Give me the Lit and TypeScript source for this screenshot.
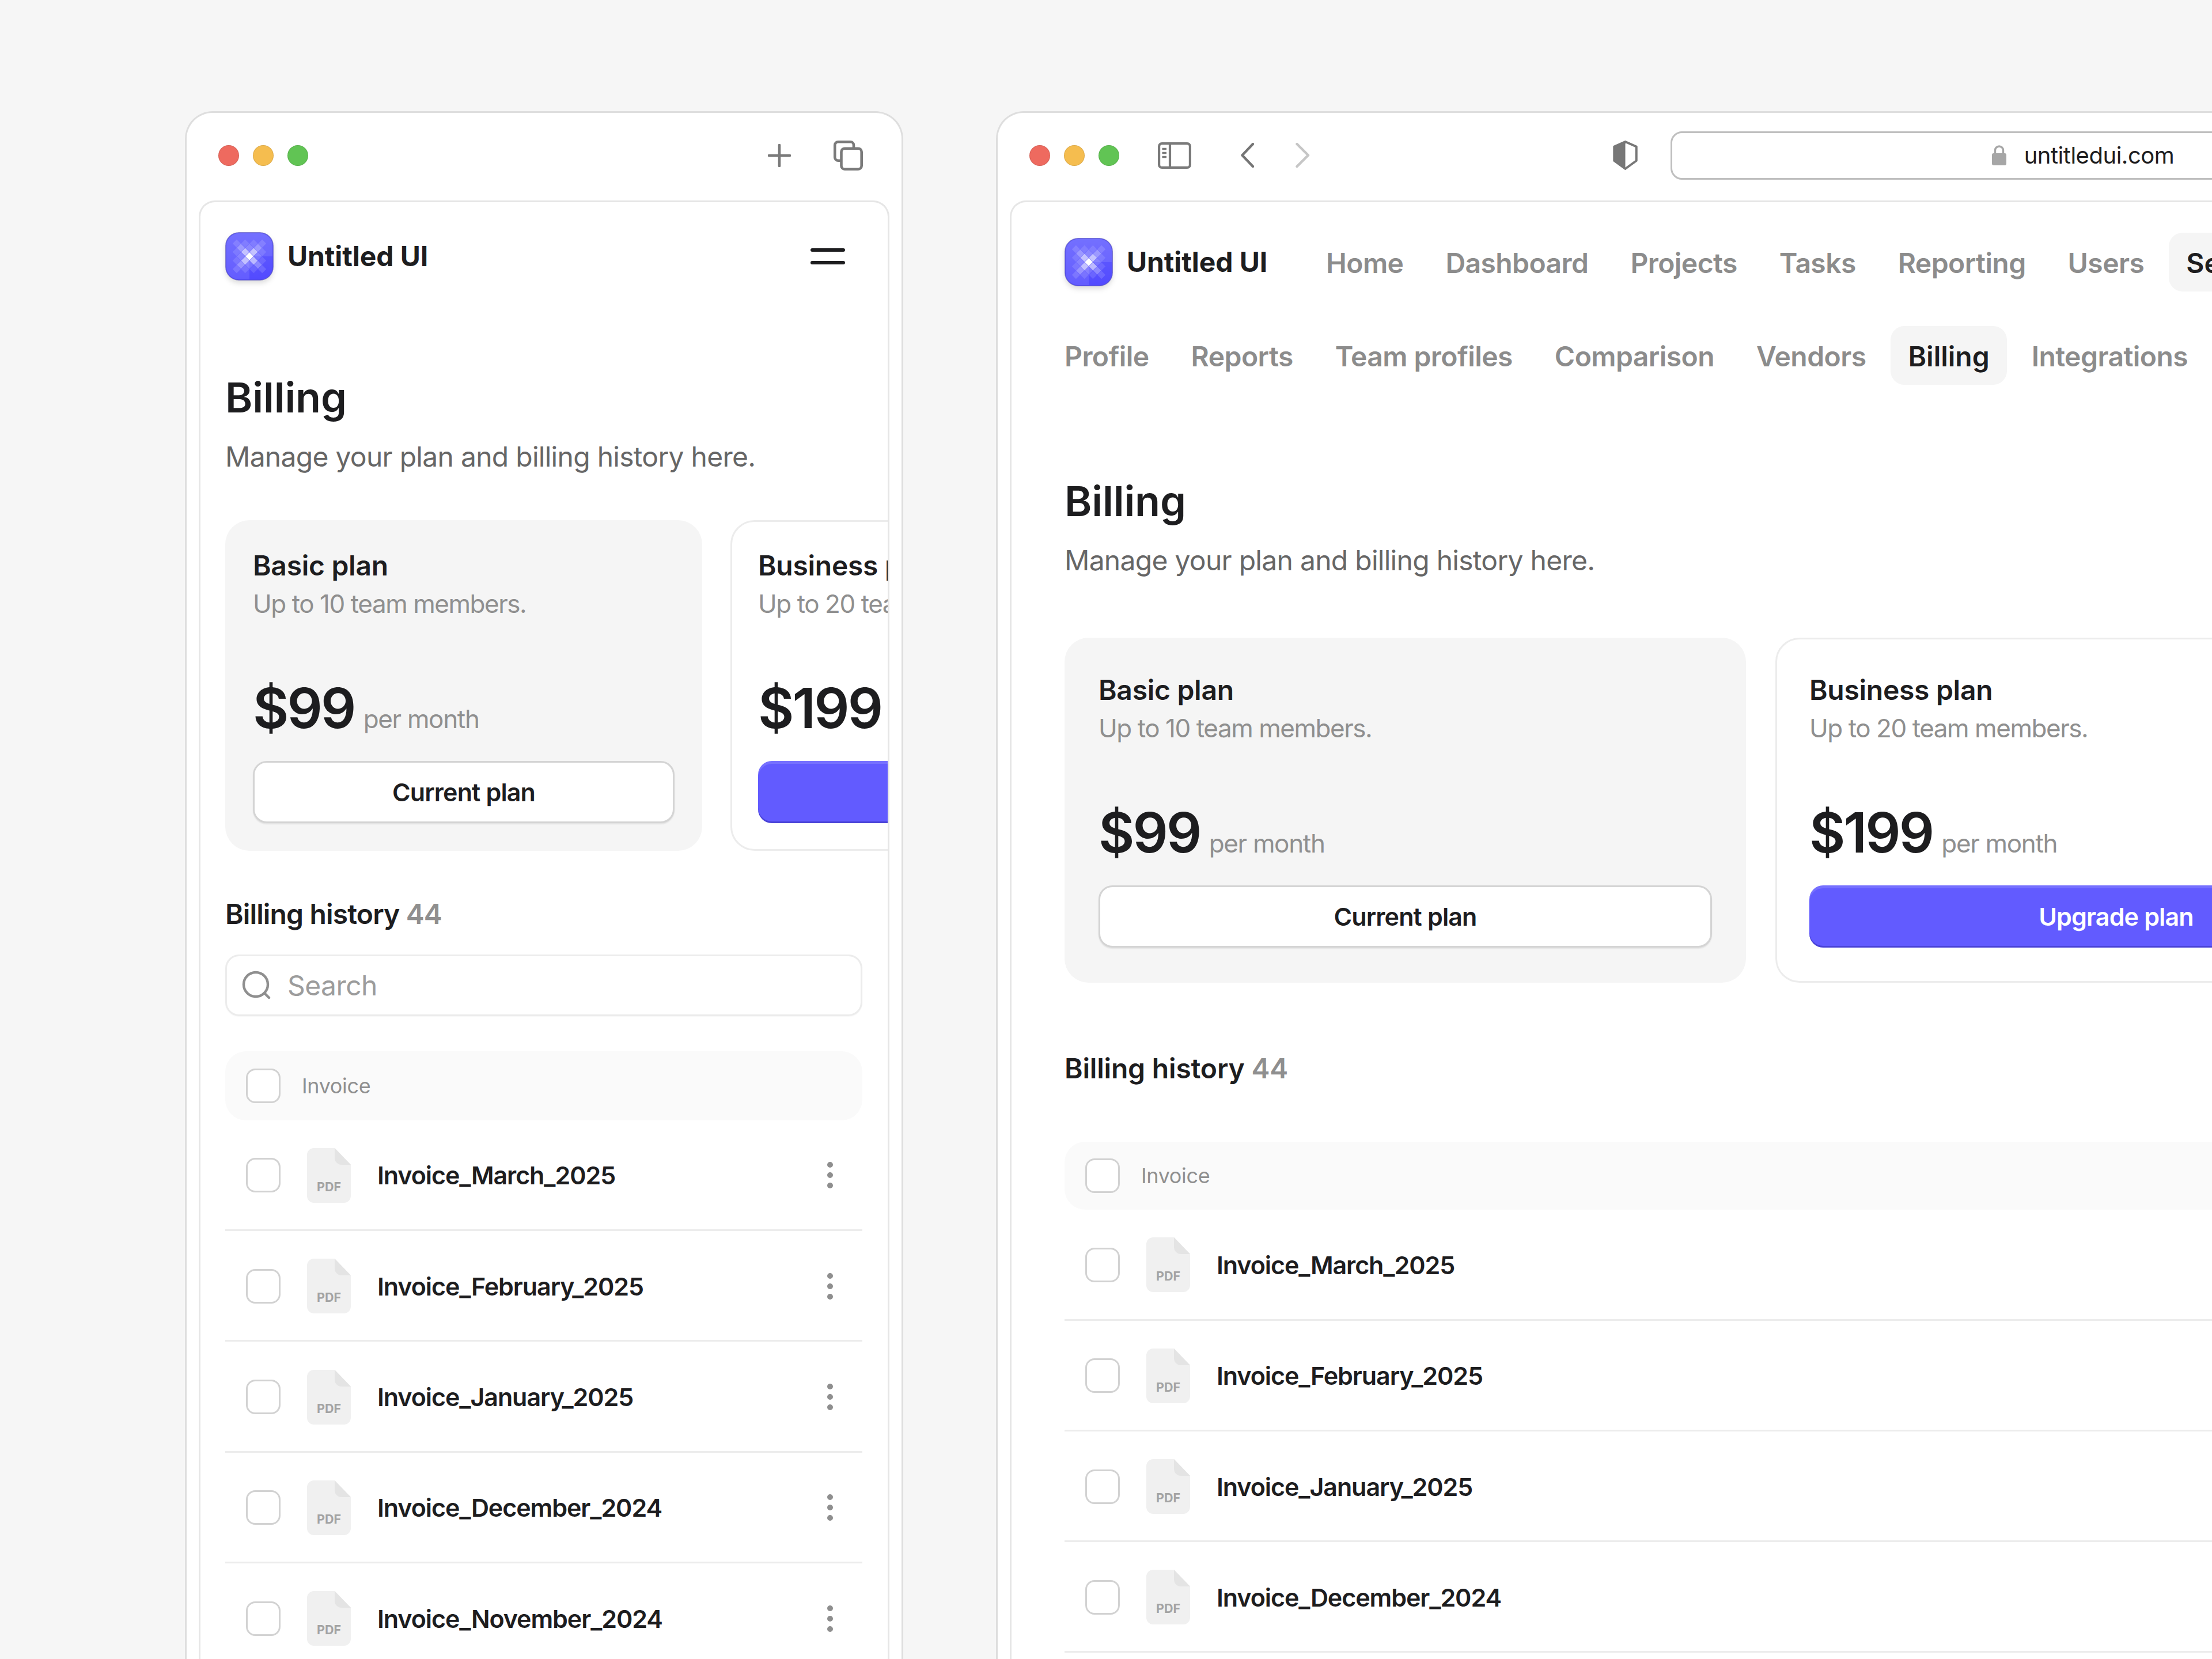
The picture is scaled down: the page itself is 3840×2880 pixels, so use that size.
import { LitElement, html, css, svg } from "lit";
import { customElement } from "lit/decorators.js";

const diamonds: [number, number, number][] = [
  [0, 0, 1],
  [-1, -1, 0.6], [1, -1, 0.6], [-1, 1, 0.6], [1, 1, 0.6],
  [-2, 0, 0.2], [2, 0, 0.2], [0, -2, 0.2], [0, 2, 0.2],
  [-2, -2, 0.32], [2, -2, 0.32], [-2, 2, 0.32], [2, 2, 0.32],
  [-3, -1, 0.12], [3, -1, 0.12], [-3, 1, 0.12], [3, 1, 0.12],
  [-1, -3, 0.12], [1, -3, 0.12], [-1, 3, 0.12], [1, 3, 0.12],
  [-3, -3, 0.14], [3, -3, 0.14], [-3, 3, 0.14], [3, 3, 0.14],
];

const logo = () => html`<svg class="logo" viewBox="0 0 84 84">
  <defs>
    <linearGradient id="lg" x1="0" y1="0" x2="0" y2="1">
      <stop offset="0" stop-color="#6460ff"></stop>
      <stop offset="1" stop-color="#524aff"></stop>
    </linearGradient>
  </defs>
  <rect x="0.8" y="0.8" width="82.4" height="82.4" rx="23" fill="url(#lg)" stroke="#4f4ab8" stroke-opacity=".6" stroke-width="1.6"></rect>
  <path d="M24 2H60A22 22 0 0 1 82 24V42H42V82H24A22 22 0 0 1 2 60V24A22 22 0 0 1 24 2Z" fill="#fff" opacity=".1"></path>
  ${diamonds.map(([i, j, o]) => {
    const cx = 42 + i * 7.4;
    const cy = 42 + j * 7.4;
    const r = 7;
    return svg`<polygon points="${cx},${cy - r} ${cx + r},${cy} ${cx},${cy + r} ${cx - r},${cy}" fill="#fff" opacity="${o}"></polygon>`;
  })}
</svg>`;

const fileIcon = () => html`<svg class="file" viewBox="0 0 76 95">
  <path d="M12 0H48L76 29V83A12 12 0 0 1 64 95H12A12 12 0 0 1 0 83V12A12 12 0 0 1 12 0Z" fill="#f0f0f0"></path>
  <path d="M48 0L76 29H60A12 12 0 0 1 48 17Z" fill="#e4e4e4"></path>
  <text x="38" y="75" text-anchor="middle" font-family="Inter, sans-serif" font-size="21.5" font-weight="700" fill="#a3a3a3">PDF</text>
</svg>`;

const kebab = () => html`<svg class="kebab" viewBox="0 0 12 48">
  <circle cx="6" cy="6" r="5" fill="#8e8e8e"></circle>
  <circle cx="6" cy="24" r="5" fill="#8e8e8e"></circle>
  <circle cx="6" cy="42" r="5" fill="#8e8e8e"></circle>
</svg>`;

const invoices = [
  "Invoice_March_2025",
  "Invoice_February_2025",
  "Invoice_January_2025",
  "Invoice_December_2024",
  "Invoice_November_2024",
];

const card = (title: string, sub: string, price: string, btn: string, primary: boolean) => html`
  <section class="card ${primary ? "outlined" : "filled"}">
    <h3 class="card-title">${title}</h3>
    <p class="card-sub">${sub}</p>
    <div class="price"><span class="amount">${price}</span><span class="per">per month</span></div>
    <div class="btn ${primary ? "btn-primary" : ""}">${btn}</div>
  </section>`;

const table = () => html`
  <div class="thead"><span class="check"></span><span class="thead-label">Invoice</span></div>
  ${invoices.map(
    (n) => html`<div class="row">
      <span class="check"></span>${fileIcon()}<span class="name">${n}</span>${kebab()}
    </div>`
  )}`;

const cards = () => html`<div class="cards">
  ${card("Basic plan", "Up to 10 team members.", "$99", "Current plan", false)}
  ${card("Business plan", "Up to 20 team members.", "$199", "Upgrade plan", true)}
</div>`;

const heading = () => html`<h1 class="title">Billing</h1>
  <p class="sub">Manage your plan and billing history here.</p>`;

const historyTitle = () => html`<h2 class="history">Billing history <span class="count">44</span></h2>`;

const dots = () => html`<div class="dots">
  <span class="dot red"></span><span class="dot yellow"></span><span class="dot green"></span>
</div>`;

@customElement("app-root")
export class AppRoot extends LitElement {
  static styles = css`
    :host {
      display: flex;
      gap: 161px;
      width: 3840px;
      height: 2880px;
      box-sizing: border-box;
      padding: 193px 0 0 321px;
      overflow: hidden;
      background: #f6f6f6;
      font-family: Inter, "Liberation Sans", sans-serif;
      color: #1d1d1f;
    }
    * { box-sizing: border-box; }
    h1, h2, h3, p { margin: 0; font: inherit; }

    .window {
      flex: none;
      height: 2800px;
      background: #fff;
      border: 3.6px solid #dedede;
      border-bottom: none;
      border-radius: 48px 48px 0 0;
      display: flex;
      flex-direction: column;
    }
    .window.mobile { width: 1247px; }
    .window.desktop { width: 2600px; }

    .toolbar {
      flex: none;
      height: 152.4px;
      padding: 0 54px 5px 55px;
      display: flex;
      align-items: center;
    }
    .toolbar svg { flex: none; }
    .dots { display: flex; gap: 24px; flex: none; }
    .dot { width: 36px; height: 36px; border-radius: 50%; border: 1.5px solid rgba(0,0,0,.1); }
    .red { background: #ee6a5f; }
    .yellow { background: #f5bd4f; }
    .green { background: #61c454; }
    .spacer { flex: 1; }
    .tb-plus { width: 40px; height: 40px; margin-right: 74px; }
    .tb-copy { width: 51px; height: 52px; }
    .mobile .toolbar { padding-right: 67px; }
    .tb-side { width: 58px; height: 46px; margin-left: 67px; }
    .tb-back { width: 23px; height: 43px; margin-left: 86px; }
    .tb-fwd { width: 25px; height: 43px; margin-left: 72px; }
    .tb-shield { width: 43px; height: 51px; margin-left: 526px; }
    .url {
      margin-left: 57px;
      width: 1432px;
      flex: none;
      height: 84px;
      border: 3.6px solid #bfbfbf;
      border-radius: 20px;
      display: flex;
      align-items: center;
      justify-content: center;
      gap: 31px;
      font-size: 40px;
      letter-spacing: -0.012em;
    }
    .url svg { width: 25px; height: 35px; }

    .panel {
      flex: 1;
      min-height: 0;
      margin: 0 21px;
      background: #fff;
      border: 3.6px solid #e6e6e6;
      border-bottom: none;
      border-radius: 28px 28px 0 0;
      overflow: hidden;
    }
    .mobile .panel { padding: 51.4px 44px 0 43px; }
    .desktop .panel { padding: 52.4px 92px 0; }

    .mobile-nav { display: flex; align-items: center; justify-content: space-between; height: 84px; }
    .brand { display: flex; align-items: center; gap: 24px; flex: none; }
    .logo { width: 84px; height: 84px; flex: none; filter: drop-shadow(0 5px 4px rgba(0,0,0,.13)); overflow: visible; }
    .wordmark { font-size: 48px; font-weight: 700; letter-spacing: -0.002em; line-height: 84px; }
    .burger { width: 60px; display: flex; flex-direction: column; gap: 15.5px; margin-right: 30px; }
    .burger span { height: 6.5px; border-radius: 4px; background: #1d1d1f; }

    .nav-row { display: flex; align-items: center; gap: 13px; height: 102px; }
    .nav-row + .nav-row { margin-top: 60px; margin-left: -30px; }
    .nav-row .brand { margin-right: 59px; }
    .item {
      height: 102px;
      padding: 3px 30px 0;
      border-radius: 24px;
      display: flex;
      align-items: center;
      font-size: 48px;
      font-weight: 600;
      letter-spacing: -0.012em;
      color: #8c8c8c;
      white-space: nowrap;
    }
    .item.on { background: #f5f5f5; color: #1d1d1f; letter-spacing: 0; }

    .title { font-size: 72px; font-weight: 600; line-height: 80px; letter-spacing: -0.002em; }
    .sub { font-size: 48px; line-height: 60px; margin-top: 33px; color: #666; letter-spacing: -0.015em; }
    .mobile .title { margin-top: 163px; }
    .desktop .title { margin-top: 162px; }

    .cards { display: flex; }
    .mobile .cards { margin-top: 80px; gap: 49px; }
    .desktop .cards { margin-top: 104px; gap: 51px; }
    .card {
      flex: none;
      display: flex;
      flex-direction: column;
      border: 3.6px solid transparent;
    }
    .mobile .card { width: 828px; height: 574px; border-radius: 42px; padding: 48px 45px 0; }
    .desktop .card { width: 1183px; height: 599px; border-radius: 42px; padding: 60px 56px 0; }
    .filled { background: #f5f5f5; }
    .outlined { border-color: #ececec; background: #fff; }
    .card-title { font-size: 48px; font-weight: 600; line-height: 56px; letter-spacing: -0.006em; white-space: nowrap; }
    .card-sub { font-size: 44px; line-height: 52px; margin-top: 12px; color: #8f8f8f; letter-spacing: -0.033em; white-space: nowrap; }
    .price { display: flex; align-items: baseline; gap: 15px; margin-top: 97px; height: 116px; white-space: nowrap; }
    .amount { font-size: 96px; font-weight: 600; line-height: 116px; letter-spacing: -0.03em; }
    .per { font-size: 44px; color: #8f8f8f; letter-spacing: -0.03em; }
    .btn {
      margin-top: 34px;
      height: 108px;
      flex: none;
      border: 3.6px solid #d4d4d4;
      border-radius: 24px;
      background: #fff;
      box-shadow: 0 2px 2px rgba(0,0,0,.08);
      display: flex;
      align-items: center;
      justify-content: center;
      font-size: 43px;
      font-weight: 600;
      letter-spacing: -0.02em;
    }
    .btn-primary {
      background: #625bff;
      border: none;
      color: #fff;
      box-shadow: inset 0 5px 0 rgba(255,255,255,.13), inset 0 -3px 0 rgba(30,20,140,.35);
    }

    .history { font-size: 48px; font-weight: 600; line-height: 56px; letter-spacing: -0.018em; }
    .count { color: #8f8f8f; }
    .mobile .history { margin-top: 82px; }
    .desktop .history { margin-top: 121.5px; letter-spacing: -0.004em; }

    .search {
      margin-top: 42px;
      height: 107px;
      border: 3.6px solid #ececec;
      border-radius: 24px;
      box-shadow: 0 1px 2px rgba(0,0,0,.04);
      display: flex;
      align-items: center;
      gap: 29px;
      padding-left: 26px;
      font-size: 48px;
      color: #9c9c9c;
      letter-spacing: -0.012em;
    }
    .search svg { width: 50px; height: 50px; flex: none; }

    .table { display: block; }
    .mobile .table { margin-top: 61px; }
    .desktop .table { margin-top: 99px; }
    .thead {
      height: 120px;
      background: #fafafa;
      border-radius: 36px;
      display: flex;
      align-items: center;
      padding-left: 36px;
      gap: 37px;
    }
    .desktop .thead { height: 118px; }
    .thead-label { font-size: 36px; color: #8f8f8f; letter-spacing: -0.01em; }
    .check {
      flex: none;
      width: 60px;
      height: 60px;
      background: #fff;
      border: 3.6px solid #d2d2d2;
      border-radius: 16px;
    }
    .row {
      height: 192.3px;
      border-bottom: 3.6px solid #ececec;
      display: flex;
      align-items: center;
      padding: 2px 50px 0 36px;
    }
    .file { width: 76px; height: 95px; flex: none; margin-left: 46px; }
    .name { margin-left: 46px; flex: 1; font-size: 43px; font-weight: 600; letter-spacing: -0.025em; }
    .kebab { width: 12px; height: 48px; flex: none; }
  `;

  render() {
    return html`
      <div class="window mobile">
        <div class="toolbar">
          ${dots()}
          <span class="spacer"></span>
          <svg class="tb-plus" viewBox="0 0 40 40" fill="none" stroke="#7a7a7a" stroke-width="4.6" stroke-linecap="round">
            <path d="M20 2V38M2 20H38"></path>
          </svg>
          <svg class="tb-copy" viewBox="0 0 51 52" fill="none" stroke="#7a7a7a" stroke-width="4.6" stroke-linejoin="round">
            <path d="M35 12V8A5.7 5.7 0 0 0 29.3 2.3H8A5.7 5.7 0 0 0 2.3 8V29A5.7 5.7 0 0 0 8 34.7H12"></path>
            <rect x="13.5" y="13.7" width="35.2" height="36" rx="6"></rect>
          </svg>
        </div>
        <div class="panel">
          <div class="mobile-nav">
            <div class="brand">${logo()}<span class="wordmark">Untitled UI</span></div>
            <div class="burger"><span></span><span></span></div>
          </div>
          ${heading()}
          ${cards()}
          ${historyTitle()}
          <div class="search">
            <svg viewBox="0 0 50 50" fill="none" stroke="#8f8f8f" stroke-width="4.4" stroke-linecap="round">
              <circle cx="24" cy="24" r="21"></circle><path d="M39 39L47 47"></path>
            </svg>
            <span>Search</span>
          </div>
          <div class="table">${table()}</div>
        </div>
      </div>

      <div class="window desktop">
        <div class="toolbar">
          ${dots()}
          <svg class="tb-side" viewBox="0 0 58 46" fill="none" stroke="#7a7a7a" stroke-width="4.2">
            <rect x="2.1" y="2.1" width="53.8" height="41.8" rx="5"></rect>
            <path d="M21 2V44"></path>
            <path d="M7.5 11.5H15M7.5 18.5H15M7.5 25.5H15" stroke-width="3.4"></path>
          </svg>
          <svg class="tb-back" viewBox="0 0 23 43" fill="none" stroke="#757575" stroke-width="4.4" stroke-linecap="round" stroke-linejoin="round">
            <path d="M21 2L2.5 21.5L21 41"></path>
          </svg>
          <svg class="tb-fwd" viewBox="0 0 25 43" fill="none" stroke="#c6c6c6" stroke-width="4.4" stroke-linecap="round" stroke-linejoin="round">
            <path d="M2.5 2L22 21.5L2.5 41"></path>
          </svg>
          <svg class="tb-shield" viewBox="0 0 43 51" fill="none">
            <path d="M21.5 2L40.7 10.5V35L21.5 49L2.3 35V10.5Z" stroke="#777" stroke-width="4" stroke-linejoin="round"></path>
            <path d="M21.5 2L2.3 10.5V35L21.5 49Z" fill="#777"></path>
          </svg>
          <div class="url">
            <svg viewBox="0 0 25 35" fill="none">
              <path d="M5.5 16V9A7 7 0 0 1 19.5 9V16" stroke="#a6a6a6" stroke-width="3.4"></path>
              <rect x="0" y="14" width="25" height="21" rx="3" fill="#a6a6a6"></rect>
            </svg>
            <span>untitledui.com</span>
          </div>
        </div>
        <div class="panel">
          <div class="nav-row">
            <div class="brand">${logo()}<span class="wordmark">Untitled UI</span></div>
            ${["Home", "Dashboard", "Projects", "Tasks", "Reporting", "Users"].map((t) => html`<span class="item">${t}</span>`)}
            <span class="item on">Settings</span>
          </div>
          <div class="nav-row">
            ${["Profile", "Reports", "Team profiles", "Comparison", "Vendors"].map((t) => html`<span class="item">${t}</span>`)}
            <span class="item on">Billing</span>
            <span class="item">Integrations</span>
          </div>
          ${heading()}
          ${cards()}
          ${historyTitle()}
          <div class="table">${table()}</div>
        </div>
      </div>
    `;
  }
}
